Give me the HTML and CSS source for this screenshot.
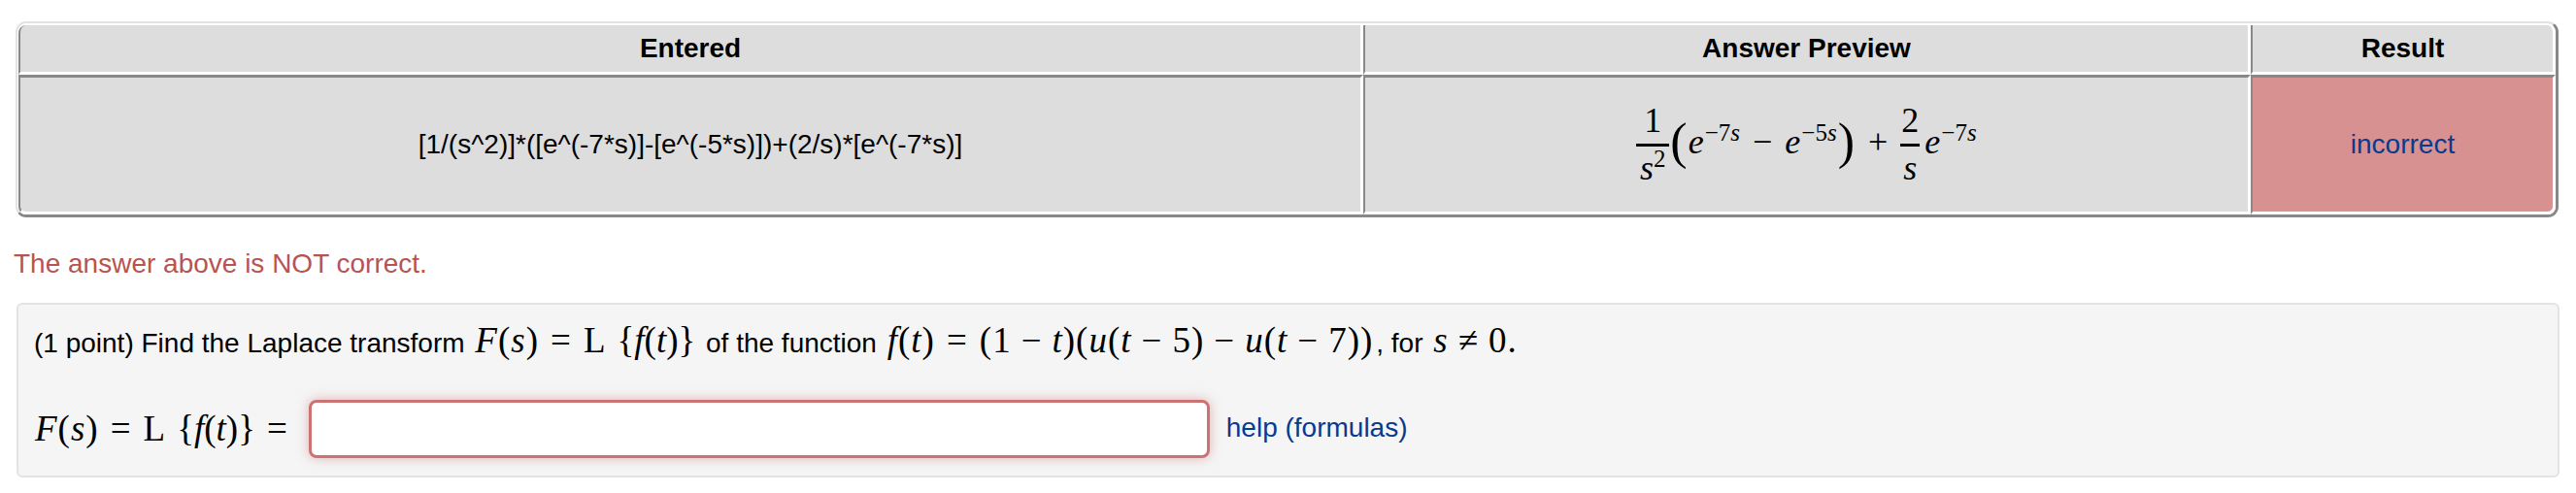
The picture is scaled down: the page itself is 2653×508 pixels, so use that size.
FILE: index.html
```html
<!DOCTYPE html>
<html lang="en">
<head>
<meta charset="utf-8">
<title>Answer results</title>
<link rel="stylesheet" href="styles.css">
</head>
<body>
<table class="results">
<tr>
<th class="col-entered">Entered</th>
<th class="col-preview">Answer Preview</th>
<th class="col-result">Result</th>
</tr>
<tr>
<td>[1/(s^2)]*([e^(-7*s)]-[e^(-5*s)])+(2/s)*[e^(-7*s)]</td>
<td>
<span class="math preview-math">
<span class="frac"><span class="num">1</span><span class="den"><i>s</i><sup>2</sup></span></span>
<span class="paren">(</span>
<span class="term"><i>e</i><sup class="exp">−7<i>s</i></sup></span>
<span class="term op">−</span>
<span class="term"><i>e</i><sup class="exp">−5<i>s</i></sup></span>
<span class="paren">)</span>
<span class="term op">+</span>
<span class="frac short"><span class="num">2</span><span class="den"><i>s</i></span></span>
<span class="term"><i>e</i><sup class="exp">−7<i>s</i></sup></span>
</span>
</td>
<td class="bad"><a href="#">incorrect</a></td>
</tr>
</table>
<p class="alert">The answer above is NOT correct.</p>
<div class="problem">
<p class="statement">(1 point) Find the Laplace transform <span class="math inline"><i>F</i>(<i>s</i>)<span class="rel">=</span>L<span class="brace">{<i>f</i>(<i>t</i>)}</span></span> of the function <span class="math inline"><i>f</i>(<i>t</i>)<span class="rel">=</span>(1<span class="bin">−</span><i>t</i>)(<i>u</i>(<i>t</i><span class="bin">−</span>5)<span class="bin">−</span><i>u</i>(<i>t</i><span class="bin">−</span>7))</span>, for <span class="math inline"><i>s</i><span class="rel tight">≠</span>0.</span></p>
<div class="answer-row">
<span class="math row-math"><i>F</i>(<i>s</i>)<span class="rel">=</span>L<span class="brace">{<i>f</i>(<i>t</i>)}</span><span class="rel last">=</span></span>
<input class="answer" type="text" aria-label="answer">
<a class="help" href="#">help (formulas)</a>
</div>
</div>
</body>
</html>
```
FILE: styles.css
```css
html, body { margin: 0; padding: 0; background: #fff; }
body {
  padding: 22px 18px 0 14px;
  font-family: "Liberation Sans", Arial, sans-serif;
  font-size: 28px;
  color: #000;
}
a { color: #0a3a8c; text-decoration: none; }

.results {
  width: 2619px;
  height: 202px;
  margin-left: 2px;
  box-sizing: border-box;
  border-collapse: separate;
  border-spacing: 0;
  border-style: solid;
  border-width: 2px 3px 3px 2px;
  border-color: #e2e2e2 #888 #888 #e2e2e2;
  border-radius: 11px;
  padding: 2px 0 0 1px;
  table-layout: fixed;
}
.results th, .results td {
  box-sizing: border-box;
  background: #ddd;
  text-align: center;
  padding: 0;
  border-style: solid;
  border-color: #888 #fff #fff #888;
  border-width: 3px 3px 3px 2px;
}
.results th { height: 51px; border-top: 0; font-weight: bold; }
.col-entered { width: 1385px; }
.col-preview { width: 914px; }
.results tr:first-child th:first-child { border-top-left-radius: 8px; }
.results tr:first-child th:last-child { border-top-right-radius: 8px; }
.results tr:last-child td:first-child { border-bottom-left-radius: 8px; }
.results td.bad { background: #d69190; border-bottom-right-radius: 8px; }

.alert {
  margin: 0;
  padding-top: 32px;
  height: 56px;
  line-height: 32px;
  color: #b85450;
}

.problem {
  box-sizing: border-box;
  width: 2619px;
  height: 180px;
  margin-left: 3px;
  background: #f5f5f5;
  border: 2px solid #e3e3e3;
  border-radius: 6px;
  padding: 0 16px;
}
.statement { margin: 0; padding-top: 9px; height: 61px; line-height: 56px; white-space: nowrap; }
.answer-row { display: flex; align-items: center; margin-top: 28px; padding-left: 1px; }

.math { font-family: "Liberation Serif", "Times New Roman", serif; font-size: 37px; letter-spacing: 1px; white-space: nowrap; }
.math.inline { margin: 0 3px; }
.row-math { padding-bottom: 2px; }
.rel { margin: 0 12px; }
.rel.tight { margin: 0 10px; }
.rel.last { margin-right: 0; }
.bin { margin: 0 10px; }
.brace { margin-left: 11px; letter-spacing: 0; }
.answer {
  box-sizing: border-box;
  flex: none;
  width: 928px;
  height: 60px;
  margin: 0 17px 0 21px;
  background: #fff;
  border: 3px solid #cb7272;
  border-radius: 8px;
  box-shadow: 0 0 12px rgba(203, 114, 114, .5);
  outline: 0;
}

.preview-math {
  display: inline-flex;
  align-items: center;
  justify-content: center;
  font-size: 36px;
  letter-spacing: 0;
  vertical-align: middle;
}
.frac { display: inline-flex; flex-direction: column; align-items: center; width: 34px; }
.frac.short { width: 20px; margin-right: 5px; }
.num { align-self: stretch; text-align: center; border-bottom: 3px solid #000; padding-bottom: 6px; line-height: 36px; }
.den { padding: 4px 0 2px; line-height: 36px; white-space: nowrap; }
.den sup { font-size: 25px; line-height: 0; }
.term { padding-bottom: 6px; line-height: 36px; white-space: nowrap; }
.term.op { margin: 0 13px; }
.exp { font-size: 25px; line-height: 0; vertical-align: 13px; letter-spacing: 0; margin-left: 1px; }
.paren { font-size: 52px; line-height: 1; padding-bottom: 6px; margin: 0 1px; }

.help { font-size: 28px; padding-bottom: 2px; }
```
